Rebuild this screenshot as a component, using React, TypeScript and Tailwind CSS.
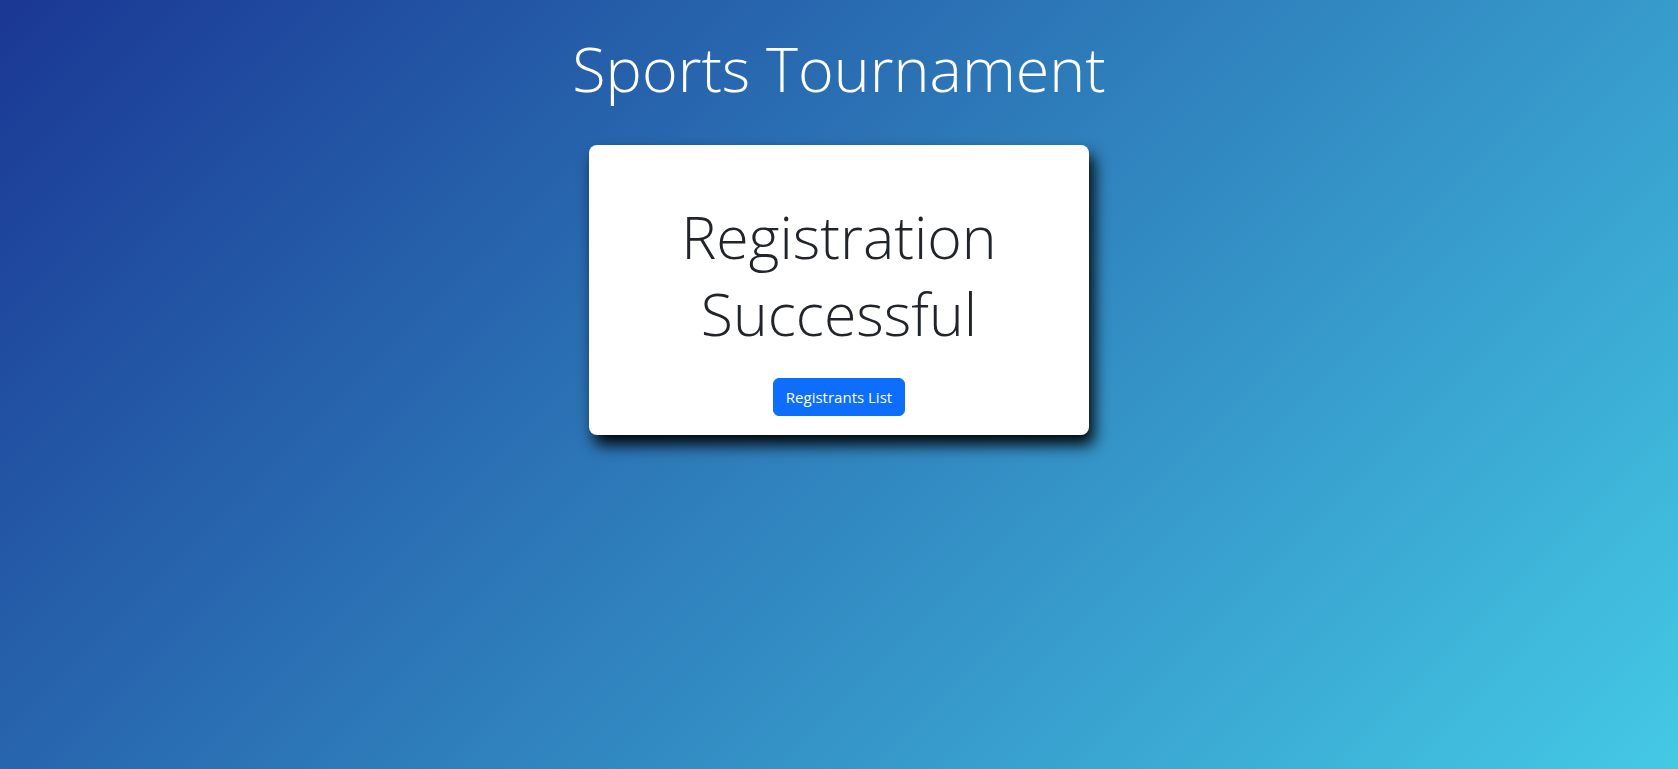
export default function App() {
  return (
    <div className="min-h-screen bg-[linear-gradient(135deg,#1a3794,#44c9e5)] text-center font-['Open_Sans',sans-serif]">
      <h1 className="pt-[30px] text-[61px] font-light leading-[77px] text-white">Sports Tournament</h1>

      {/* Card */}
      <div className="mx-auto mt-[38px] w-[500px] rounded-lg bg-white px-4 pt-[53px] pb-[19px] shadow-[5px_10px_15px_rgba(0,0,0,0.95)]">
        <h2 className="text-[59px] font-light leading-[77px] text-[#212529]">
          Registration
          <br />
          Successful
        </h2>
        <button className="mt-[26px] rounded-md border border-[#0d6efd] bg-[#0d6efd] px-3 py-1.5 text-[15px] leading-6 text-white">
          Registrants List
        </button>
      </div>
    </div>
  );
}
